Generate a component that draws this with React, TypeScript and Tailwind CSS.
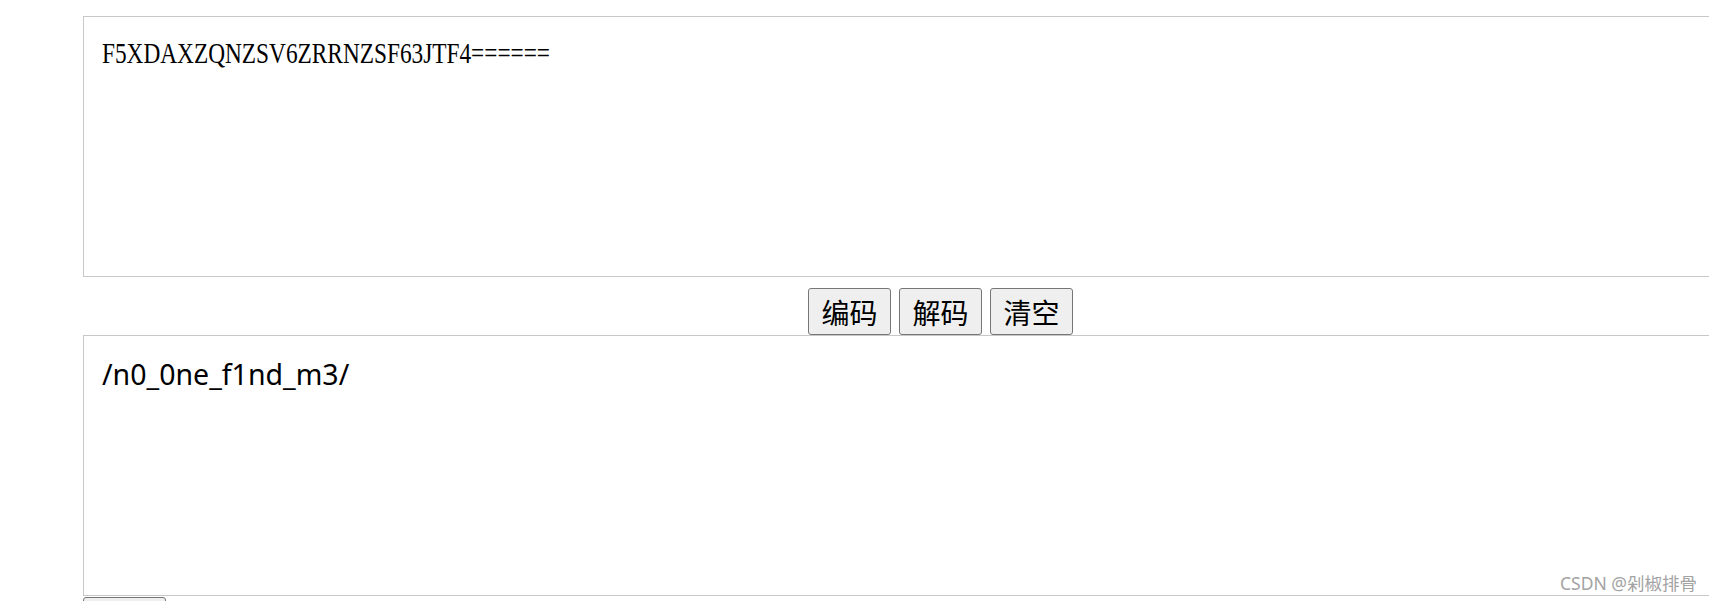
const cjk = "font-['Noto_Sans_CJK_SC',sans-serif]";

function ToolButton({ label }: { label?: string }) {
	return (
		<button
			type="button"
			className={`w-[83px] h-[47px] flex items-center justify-center rounded-[3px] border border-[#767676] bg-[#efefef] text-[28px] leading-none text-black ${cjk}`}
		>
			{label}
		</button>
	);
}

export default function App() {
	return (
		<div className="relative w-[1709px] h-[601px] overflow-hidden bg-white">
			<div className="pl-[83px] pt-[16px] w-[1798px]">
				{/* input */}
				<div className="w-[1715px] h-[261px] border border-[#c8c8c8] pl-[18px] pt-[19px]">
					<span className="inline-block origin-left scale-x-[0.777] whitespace-nowrap font-['Liberation_Serif',serif] text-[30px] leading-[33px] text-black">
						F5XDAXZQNZSV6ZRRNZSF63JTF4======
					</span>
				</div>

				{/* actions */}
				<div className="w-[1715px] h-[58px] pt-[11px] flex justify-center gap-[8px]">
					<ToolButton label="编码" />
					<ToolButton label="解码" />
					<ToolButton label="清空" />
				</div>

				{/* output */}
				<div className="w-[1715px] h-[261px] border border-[#c8c8c8] pl-[18px] pt-[19px]">
					<span className="whitespace-nowrap font-['Noto_Sans',sans-serif] text-[28.5px] leading-[38px] text-black">
						/n0_0ne_f1nd_m3/
					</span>
				</div>

				{/* next row, cut by the window */}
				<div className="mt-px flex">
					<ToolButton />
				</div>
			</div>

			{/* watermark */}
			<div className="absolute right-[12px] top-[571px] whitespace-nowrap text-[17.5px] leading-[24px] text-[#a3a3a3] font-['Noto_Sans','Noto_Sans_CJK_SC',sans-serif]">
				CSDN @剁椒排骨
			</div>
		</div>
	);
}
